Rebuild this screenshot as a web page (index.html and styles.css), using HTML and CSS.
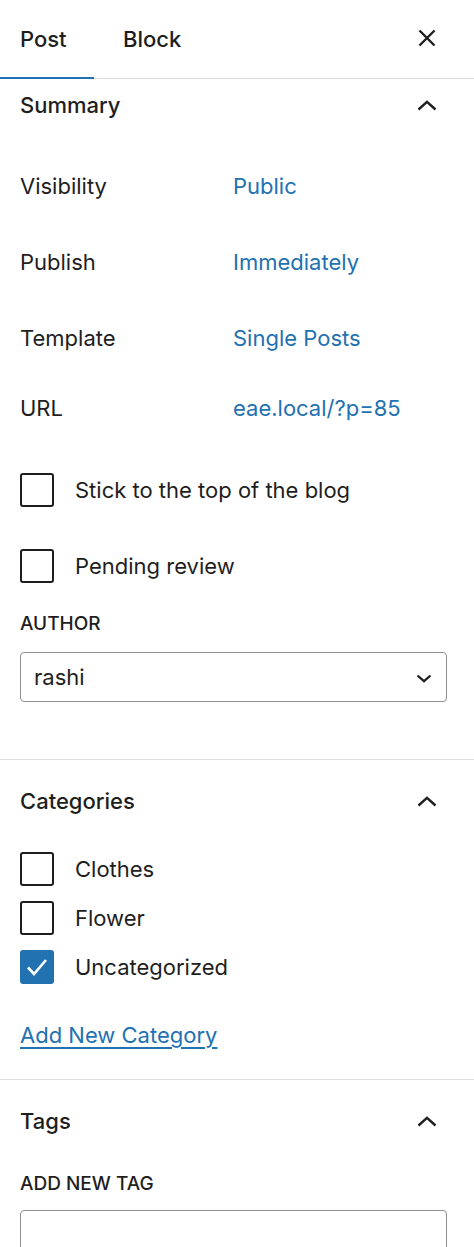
FILE: index.html
```html
<!DOCTYPE html>
<html lang="en">
<head>
<meta charset="utf-8">
<title>Post settings</title>
<link rel="stylesheet" href="styles.css">
</head>
<body>
<div class="sidebar">
  <div class="tabs">
    <div class="tab tab-active">Post</div>
    <div class="tab tab-block">Block</div>
    <div class="icon-btn close-btn">
      <svg width="18" height="18" viewBox="0 0 18 18"><path d="M1.5 1.5 L16.5 16.5 M16.5 1.5 L1.5 16.5" stroke="#1e1e1e" stroke-width="2.4" fill="none"/></svg>
    </div>
  </div>

  <section class="panel panel-first">
    <div class="panel-head">
      <span class="panel-title">Summary</span>
      <span class="icon-btn"><svg width="20" height="11" viewBox="0 0 20 11"><polyline points="1.5,9.5 10,1.8 18.5,9.5" stroke="#1e1e1e" stroke-width="2.4" fill="none"/></svg></span>
    </div>
    <div class="rows">
      <div class="row"><span class="row-label">Visibility</span><span class="row-value">Public</span></div>
      <div class="row"><span class="row-label">Publish</span><span class="row-value">Immediately</span></div>
      <div class="row"><span class="row-label">Template</span><span class="row-value">Single Posts</span></div>
      <div class="row row-url"><span class="row-label">URL</span><span class="row-value">eae.local/?p=85</span></div>
    </div>
    <div class="check-row check-summary"><span class="box"></span><span>Stick to the top of the blog</span></div>
    <div class="check-row check-summary"><span class="box"></span><span>Pending review</span></div>
    <div class="field-label author-label">AUTHOR</div>
    <div class="select">
      <span>rashi</span>
      <svg width="16" height="9" viewBox="0 0 16 9"><polyline points="1.5,1.5 8,7.2 14.5,1.5" stroke="#1e1e1e" stroke-width="2.2" fill="none"/></svg>
    </div>
  </section>

  <section class="panel">
    <div class="panel-head">
      <span class="panel-title">Categories</span>
      <span class="icon-btn"><svg width="20" height="11" viewBox="0 0 20 11"><polyline points="1.5,9.5 10,1.8 18.5,9.5" stroke="#1e1e1e" stroke-width="2.4" fill="none"/></svg></span>
    </div>
    <div class="cat-list">
      <div class="check-row"><span class="box"></span><span>Clothes</span></div>
      <div class="check-row"><span class="box"></span><span>Flower</span></div>
      <div class="check-row"><span class="box box-checked"><svg width="34" height="34" viewBox="0 0 34 34"><polyline points="8,17.5 14,24 26,10" stroke="#fff" stroke-width="2.6" fill="none"/></svg></span><span>Uncategorized</span></div>
    </div>
    <a class="add-link" href="#">Add New Category</a>
  </section>

  <section class="panel panel-last">
    <div class="panel-head">
      <span class="panel-title">Tags</span>
      <span class="icon-btn"><svg width="20" height="11" viewBox="0 0 20 11"><polyline points="1.5,9.5 10,1.8 18.5,9.5" stroke="#1e1e1e" stroke-width="2.4" fill="none"/></svg></span>
    </div>
    <div class="field-label tag-label">ADD NEW TAG</div>
    <div class="text-input"></div>
  </section>
</div>
</body>
</html>
```

FILE: styles.css
```css
* { box-sizing: border-box; }

html, body {
  margin: 0;
  padding: 0;
  background: #fff;
}

body {
  font-family: Inter, "Noto Sans", "Liberation Sans", sans-serif;
  font-size: 22px;
  color: #1e1e1e;
  overflow: hidden;
}

.sidebar {
  width: 474px;
}

.tabs {
  display: flex;
  align-items: stretch;
  height: 79px;
  border-bottom: 1px solid #dcdcde;
}

.tab {
  display: flex;
  align-items: center;
  height: 79px;
  margin-bottom: -1px;
  padding: 0 28px 0 20px;
  font-weight: 500;
  line-height: 1;
  padding-bottom: 2px;
}

.tab-active {
  width: 94px;
  box-shadow: inset 0 -2px 0 #2271b1;
}

.tab-block {
  padding-left: 29px;
}

.icon-btn {
  display: flex;
  align-items: center;
  justify-content: center;
  width: 40px;
  height: 40px;
}

.close-btn {
  margin-left: auto;
  margin-right: 27px;
  align-self: center;
  margin-bottom: 2px;
}

.panel {
  padding: 15px 27px 33px 20px;
  border-bottom: 1px solid #e0e0e0;
}

.panel-first {
  padding-top: 0;
  padding-bottom: 57px;
}

.panel-last {
  border-bottom: none;
  padding-bottom: 0;
}

.panel-head {
  display: flex;
  align-items: center;
  justify-content: space-between;
  height: 52px;
}

.panel-title {
  font-weight: 500;
  line-height: 1;
}

.rows {
  margin-top: 33px;
}

.row {
  display: grid;
  grid-template-columns: 213px 1fr;
  align-items: center;
  height: 44px;
  margin-bottom: 32px;
}

.row-url {
  margin-top: -6px;
  margin-bottom: 0;
}

.row-value {
  color: #2271b1;
}

.check-row {
  display: flex;
  align-items: center;
  gap: 21px;
  height: 34px;
}

.check-summary {
  margin-top: 43px;
}

.check-summary + .check-summary {
  margin-top: 42px;
}

.box {
  flex: none;
  width: 34px;
  height: 34px;
  border: 2px solid #1e1e1e;
  border-radius: 3px;
  background: #fff;
}

.box-checked {
  border: none;
  background: #2271b1;
}

.box-checked svg {
  display: block;
}

.field-label {
  font-size: 19px;
  font-weight: 500;
  line-height: 22px;
}

.author-label {
  margin-top: 30px;
}

.select {
  display: flex;
  align-items: center;
  justify-content: space-between;
  margin-top: 17px;
  height: 50px;
  padding: 0 14px 0 13px;
  border: 1px solid #8c8f94;
  border-radius: 4px;
}

.select svg {
  margin-top: 2px;
}

.cat-list {
  display: flex;
  flex-direction: column;
  gap: 15px;
  margin-top: 25px;
}

.add-link {
  display: block;
  margin-top: 40px;
  line-height: 22px;
  color: #2271b1;
  text-decoration: underline;
  text-underline-offset: 4px;
  text-decoration-thickness: 1.5px;
}

.tag-label {
  margin-top: 26px;
}

.text-input {
  margin-top: 15px;
  height: 60px;
  border: 1px solid #8c8f94;
  border-radius: 4px;
}
```
